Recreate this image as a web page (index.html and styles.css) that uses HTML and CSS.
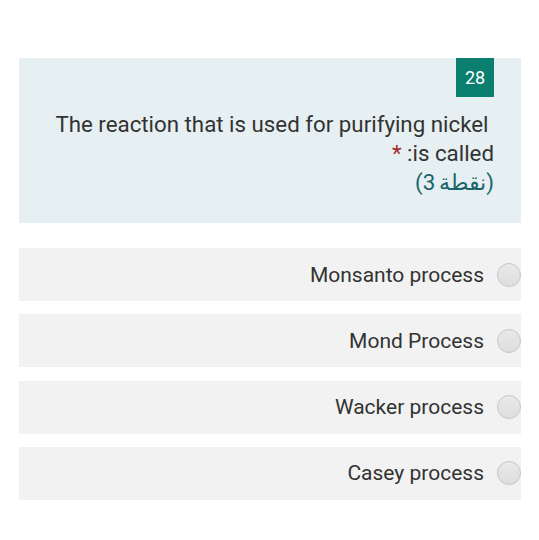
FILE: index.html
```html
<!DOCTYPE html>
<html lang="en">
<head>
<meta charset="utf-8">
<link rel="stylesheet" href="styles.css">
</head>
<body>
<main class="page">
  <section class="question">
    <div class="badge-row"><span class="badge">28</span></div>
    <p class="title" dir="rtl">The reaction that is used for purifying nickel&nbsp; is called: <span class="req">*</span></p>
    <div class="points-row">
      <span class="points"><span>(</span><span>3</span><span class="word" dir="rtl">نقطة</span><span>)</span></span>
    </div>
  </section>
  <ul class="options">
    <li class="option"><span class="label">Monsanto process</span><span class="radio"></span></li>
    <li class="option"><span class="label">Mond Process</span><span class="radio"></span></li>
    <li class="option"><span class="label">Wacker process</span><span class="radio"></span></li>
    <li class="option"><span class="label">Casey process</span><span class="radio"></span></li>
  </ul>
</main>
</body>
</html>
```
FILE: styles.css
```css
* { box-sizing: border-box; }
html, body { margin: 0; padding: 0; background: #ffffff; }
body { font-family: Roboto, "Noto Sans", Arial, sans-serif; color: #333333; }
.page { padding: 58px 18px 0 19px; width: 539px; }
.question {
  background: #e6eff1;
  padding: 0 27px 26px 30px;
}
.badge-row { display: flex; justify-content: flex-end; }
.badge {
  width: 38px; height: 39px;
  background: #0b7f6f;
  color: #ffffff;
  font-size: 18px;
  display: flex; align-items: center; justify-content: center;
}
.title {
  margin: 13px 0 0 0;
  font-size: 22.3px;
  line-height: 29px;
  text-align: right;
}
.req { color: #a4262c; }
.points-row {
  display: flex;
  justify-content: flex-end;
  height: 29px;
  align-items: center;
}
.points {
  display: flex;
  direction: ltr;
  font-size: 22.3px;
  line-height: 29px;
  color: #19656b;
}
.points .word { margin-left: 4px; }
.options {
  list-style: none;
  margin: 25px 0 0 0;
  padding: 0;
  display: flex; flex-direction: column; gap: 13.3px;
}
.option {
  height: 53px;
  background: #f2f2f2;
  display: flex; align-items: center; justify-content: flex-end;
  gap: 13px;
}
.label { font-size: 21px; color: #333333; }
.radio {
  width: 24px; height: 24px;
  border-radius: 50%;
  border: 1px solid #c6c6c6;
  background: linear-gradient(#e9e9e9, #dedede);
}
```
